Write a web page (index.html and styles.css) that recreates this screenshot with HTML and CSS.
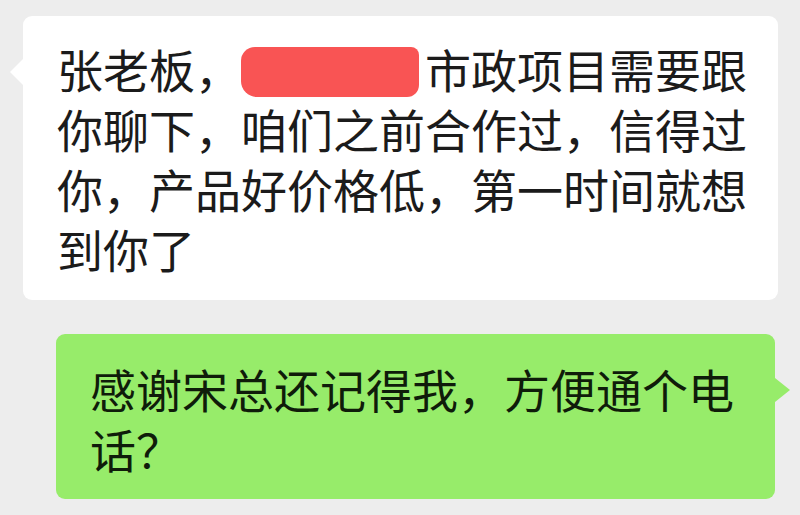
FILE: index.html
```html
<!DOCTYPE html>
<html lang="zh-CN">
<head>
    <meta charset="UTF-8">
    <meta name="viewport" content="width=device-width, initial-scale=1.0">
    <title>聊天记录</title>
    <link rel="stylesheet" href="styles.css">
</head>
<body>
    <div class="chat">
        <!-- 对方消息 -->
        <div class="msg-row left">
            <div class="bubble white">张老板，<span class="redact"></span>市政项目需要跟你聊下，咱们之前合作过，信得过你，产品好价格低，第一时间就想到你了</div>
        </div>

        <!-- 我的消息 -->
        <div class="msg-row right">
            <div class="bubble green">感谢宋总还记得我，方便通个电话？</div>
        </div>
    </div>
</body>
</html>
```

FILE: styles.css
```css
* {
    margin: 0;
    padding: 0;
    box-sizing: border-box;
}

body {
    font-family: "Noto Sans CJK SC", "Noto Sans", sans-serif;
    background: #ededed;
    width: 800px;
    height: 515px;
    overflow: hidden;
}

.chat {
    display: flex;
    flex-direction: column;
    gap: 34px;
    padding-top: 16px;
}

.msg-row {
    display: flex;
}

.msg-row.left {
    padding-left: 23px;
}

.msg-row.right {
    justify-content: flex-end;
    padding-right: 25px;
}

.bubble {
    position: relative;
    font-size: 46px;
    line-height: 60px;
    border-radius: 9px;
    padding: 22px 30px 22px 34px;
}

.bubble.white {
    width: 755px;
    background: #ffffff;
    color: #1b1b1b;
}

.bubble.green {
    width: 719px;
    background: #97ec6a;
    color: #0f1c0a;
    padding-top: 24px;
    padding-bottom: 21px;
}

/* little triangle tails */
.bubble.white::before {
    content: "";
    position: absolute;
    left: -13px;
    top: 43px;
    border-style: solid;
    border-width: 13px 13px 13px 0;
    border-color: transparent #ffffff transparent transparent;
}

.bubble.green::after {
    content: "";
    position: absolute;
    right: -15px;
    top: 44px;
    border-style: solid;
    border-width: 12px 0 12px 15px;
    border-color: transparent transparent transparent #97ec6a;
}

.redact {
    display: inline-block;
    width: 178px;
    height: 50px;
    margin-right: 6px;
    vertical-align: -9px;
    background: #f95454;
    border-radius: 14px 8px 12px 16px;
}
```
